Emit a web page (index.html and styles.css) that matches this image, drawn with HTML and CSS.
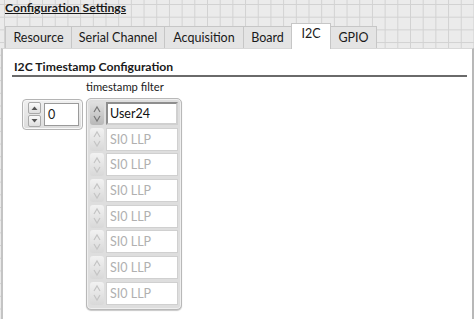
FILE: index.html
```html
<!DOCTYPE html>
<html>
<head>
<meta charset="utf-8">
<link rel="stylesheet" href="styles.css">
</head>
<body>
<div class="page">
  <div class="title">Configuration Settings</div>
  <div class="tabs">
    <div class="tab">Resource</div>
    <div class="tab">Serial Channel</div>
    <div class="tab">Acquisition</div>
    <div class="tab">Board</div>
    <div class="tab active">I2C</div>
    <div class="tab">GPIO</div>
  </div>
  <div class="panel">
    <div class="section">I2C Timestamp Configuration</div>
    <div class="content">
      <div class="numeric">
        <div class="spin">
          <div class="btn"><svg width="9" height="6" viewBox="0 0 9 6"><path d="M1.5 5 L4.5 1.5 L7.5 5 Z" fill="#555"/></svg></div>
          <div class="btn"><svg width="9" height="6" viewBox="0 0 9 6"><path d="M1.5 1 L4.5 4.5 L7.5 1 Z" fill="#555"/></svg></div>
        </div>
        <div class="numbox">0</div>
      </div>
      <div class="arraycol">
        <div class="label">timestamp filter</div>
        <div class="array">
          <div class="item">
            <div class="idx on"><svg width="12" height="22" viewBox="0 0 12 22"><path d="M3 9 L6 4 L9 9" stroke="#777" stroke-width="1.2" fill="none"/><path d="M3 13 L6 18 L9 13" stroke="#777" stroke-width="1.2" fill="none"/></svg></div>
            <div class="box on">User24</div>
          </div>
          <div class="item"><div class="idx"><svg width="12" height="22" viewBox="0 0 12 22"><path d="M3 9 L6 4 L9 9" stroke="#c4c4c4" stroke-width="1.2" fill="none"/><path d="M3 13 L6 18 L9 13" stroke="#c4c4c4" stroke-width="1.2" fill="none"/></svg></div><div class="box">SI0 LLP</div></div>
          <div class="item"><div class="idx"><svg width="12" height="22" viewBox="0 0 12 22"><path d="M3 9 L6 4 L9 9" stroke="#c4c4c4" stroke-width="1.2" fill="none"/><path d="M3 13 L6 18 L9 13" stroke="#c4c4c4" stroke-width="1.2" fill="none"/></svg></div><div class="box">SI0 LLP</div></div>
          <div class="item"><div class="idx"><svg width="12" height="22" viewBox="0 0 12 22"><path d="M3 9 L6 4 L9 9" stroke="#c4c4c4" stroke-width="1.2" fill="none"/><path d="M3 13 L6 18 L9 13" stroke="#c4c4c4" stroke-width="1.2" fill="none"/></svg></div><div class="box">SI0 LLP</div></div>
          <div class="item"><div class="idx"><svg width="12" height="22" viewBox="0 0 12 22"><path d="M3 9 L6 4 L9 9" stroke="#c4c4c4" stroke-width="1.2" fill="none"/><path d="M3 13 L6 18 L9 13" stroke="#c4c4c4" stroke-width="1.2" fill="none"/></svg></div><div class="box">SI0 LLP</div></div>
          <div class="item"><div class="idx"><svg width="12" height="22" viewBox="0 0 12 22"><path d="M3 9 L6 4 L9 9" stroke="#c4c4c4" stroke-width="1.2" fill="none"/><path d="M3 13 L6 18 L9 13" stroke="#c4c4c4" stroke-width="1.2" fill="none"/></svg></div><div class="box">SI0 LLP</div></div>
          <div class="item"><div class="idx"><svg width="12" height="22" viewBox="0 0 12 22"><path d="M3 9 L6 4 L9 9" stroke="#c4c4c4" stroke-width="1.2" fill="none"/><path d="M3 13 L6 18 L9 13" stroke="#c4c4c4" stroke-width="1.2" fill="none"/></svg></div><div class="box">SI0 LLP</div></div>
          <div class="item"><div class="idx"><svg width="12" height="22" viewBox="0 0 12 22"><path d="M3 9 L6 4 L9 9" stroke="#c4c4c4" stroke-width="1.2" fill="none"/><path d="M3 13 L6 18 L9 13" stroke="#c4c4c4" stroke-width="1.2" fill="none"/></svg></div><div class="box">SI0 LLP</div></div>
        </div>
      </div>
    </div>
  </div>
</div>
</body>
</html>
```
FILE: styles.css
```css
html, body {
  margin: 0;
  padding: 0;
}
body {
  width: 474px;
  height: 319px;
  overflow: hidden;
  font-family: Lato, "Noto Sans", sans-serif;
  font-size: 12.5px;
  color: #1a1a1a;
  background-color: #ebebeb;
  background-image:
    linear-gradient(to right, #d2d2d2 1px, transparent 1px),
    linear-gradient(to bottom, #d2d2d2 1px, transparent 1px);
  background-size: 12.7px 12.7px;
  background-position: 4px 4px;
}
.page {
  display: flex;
  flex-direction: column;
  height: 319px;
}
.title {
  font-weight: bold;
  font-size: 12.2px;
  text-decoration: underline;
  padding: 0 0 0 5px;
  line-height: 15px;
  height: 23px;
}
.tabs {
  display: grid;
  grid-template-columns: 66px 93px 79px 48px 39px 46px;
  align-items: end;
  padding-left: 5px;
  height: 25px;
}
.tab {
  height: 22px;
  line-height: 21px;
  text-align: center;
  background: #e4e4e4;
  border: 1px solid #c6c6c6;
  border-bottom: none;
  margin-right: -1px;
  font-size: 12.5px;
  box-sizing: border-box;
}
.tab.active {
  background: #ffffff;
  height: 26px;
  line-height: 19px;
  position: relative;
  z-index: 1;
  margin-bottom: -1px;
}
.panel {
  flex: 1;
  background: #ffffff;
  margin: 0 0 0 1px;
  width: 473px;
  border-left: 2px solid #c4c4c4;
  border-right: 2px solid #b8b8b8;
  box-sizing: border-box;
  border-top: 1px solid #d8d8d8;
  padding: 10px 0 0 9px;
  display: flex;
  flex-direction: column;
}
.section {
  font-weight: bold;
  font-size: 12.2px;
  line-height: 15px;
  padding-left: 2px;
  padding-bottom: 1px;
  border-bottom: 2px solid #6a6a6a;
  width: 453px;
}
.content {
  display: flex;
  align-items: flex-start;
  padding-left: 10px;
}
.numeric {
  margin-top: 22px;
  width: 61px;
  height: 31px;
  box-sizing: border-box;
  border: 1px solid #b4b4b4;
  border-radius: 4px;
  background: linear-gradient(#f0f0f0, #dcdcdc);
  display: flex;
  align-items: center;
  padding: 0 3px 0 5px;
  gap: 3px;
  box-shadow: inset 0 0 0 1px #f8f8f8;
}
.spin {
  display: flex;
  flex-direction: column;
  gap: 1px;
}
.btn {
  width: 11px;
  height: 10px;
  border: 1px solid #a9a9a9;
  border-radius: 2px;
  background: linear-gradient(#fafafa, #dedede);
  display: flex;
  align-items: center;
  justify-content: center;
}
.numbox {
  flex: 1;
  height: 23px;
  box-sizing: border-box;
  border: 1px solid #9a9a9a;
  background: #fff;
  font-size: 12.5px;
  line-height: 21px;
  padding-left: 3px;
}
.arraycol {
  display: flex;
  flex-direction: column;
  margin-left: 3px;
}
.label {
  padding-left: 0;
  font-size: 11.2px;
  line-height: 16px;
  height: 21px;
  padding-top: 2px;
  box-sizing: border-box;
}
.array {
  width: 96px;
  box-sizing: border-box;
  border: 1px solid #b8b8b8;
  border-radius: 5px;
  background: #dedede;
  box-shadow: inset 0 0 0 1px #efefef, 0 1px 1px #c8c8c8;
  padding: 3px 3px 4px 3px;
  display: flex;
  flex-direction: column;
  gap: 2.7px;
}
.item {
  display: flex;
  align-items: center;
  gap: 2px;
}
.idx {
  width: 14px;
  height: 23px;
  border-radius: 3px;
  background: linear-gradient(#f2f2f2, #d8d8d8);
  display: flex;
  align-items: center;
  justify-content: center;
}
.idx.on {
  background: linear-gradient(#e0e0e0, #b8b8b8);
}
.box {
  flex: 1;
  height: 23px;
  box-sizing: border-box;
  background: #ffffff;
  border: 1px solid #d0d0d0;
  color: #b0b0b0;
  font-size: 12.5px;
  line-height: 21px;
  padding-left: 3px;
}
.box.on {
  border: 2px solid #8e8e8e;
  border-right-color: #d0d0d0;
  border-bottom-color: #d0d0d0;
  color: #111;
  line-height: 19px;
  padding-left: 2px;
}
```
